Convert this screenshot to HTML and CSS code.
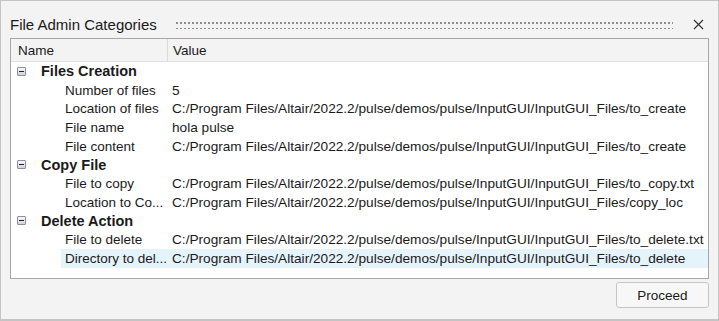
FILE: index.html
```html
<!DOCTYPE html>
<html lang="en">
<head>
  <meta charset="UTF-8">
  <title>File Admin Categories</title>
  <link rel="stylesheet" href="styles.css">
</head>
<body>
  <div class="window">
    <!-- Title bar -->
    <div class="titlebar">
      <span class="title">File Admin Categories</span>
      <span class="grip"></span>
      <span class="close">
        <svg width="11" height="11" viewBox="0 0 11 11"><path d="M1 1 L10 10 M10 1 L1 10" stroke="#333" stroke-width="1.2" fill="none"/></svg>
      </span>
    </div>

    <!-- Property grid -->
    <div class="grid">
      <div class="grid-head">
        <div class="col-name">Name</div>
        <div class="col-value">Value</div>
      </div>

      <div class="cat"><span class="toggle"></span>Files Creation</div>
      <div class="prop"><div class="col-name">Number of files</div><div class="col-value">5</div></div>
      <div class="prop"><div class="col-name">Location of files</div><div class="col-value">C:/Program Files/Altair/2022.2/pulse/demos/pulse/InputGUI/InputGUI_Files/to_create</div></div>
      <div class="prop"><div class="col-name">File name</div><div class="col-value">hola pulse</div></div>
      <div class="prop"><div class="col-name">File content</div><div class="col-value">C:/Program Files/Altair/2022.2/pulse/demos/pulse/InputGUI/InputGUI_Files/to_create</div></div>

      <div class="cat"><span class="toggle"></span>Copy File</div>
      <div class="prop"><div class="col-name">File to copy</div><div class="col-value">C:/Program Files/Altair/2022.2/pulse/demos/pulse/InputGUI/InputGUI_Files/to_copy.txt</div></div>
      <div class="prop"><div class="col-name">Location to Co...</div><div class="col-value">C:/Program Files/Altair/2022.2/pulse/demos/pulse/InputGUI/InputGUI_Files/copy_loc</div></div>

      <div class="cat"><span class="toggle"></span>Delete Action</div>
      <div class="prop"><div class="col-name">File to delete</div><div class="col-value">C:/Program Files/Altair/2022.2/pulse/demos/pulse/InputGUI/InputGUI_Files/to_delete.txt</div></div>
      <div class="prop selected"><div class="col-name">Directory to del...</div><div class="col-value">C:/Program Files/Altair/2022.2/pulse/demos/pulse/InputGUI/InputGUI_Files/to_delete</div></div>
    </div>

    <!-- Footer -->
    <div class="footer">
      <button class="btn">Proceed</button>
    </div>
  </div>
</body>
</html>
```

FILE: styles.css
```css
/* Global */
body {
  margin: 0;
  padding: 0;
  font-family: 'Liberation Sans', Arial, sans-serif;
  color: #1a1a1a;
}

/* Window */
.window {
  width: 719px;
  height: 321px;
  box-sizing: border-box;
  border: 1px solid #c4c4c4;
  border-bottom-width: 2px;
  background-color: #f3f3f3;
  display: flex;
  flex-direction: column;
}

/* Title bar */
.titlebar {
  height: 37px;
  display: flex;
  align-items: center;
  padding: 10px 14px 0 9px;
  box-sizing: border-box;
}

.title {
  font-size: 15px;
}

.grip {
  flex: 1;
  height: 8px;
  margin: 0 20px 0 18px;
  background-image: radial-gradient(circle, #8e8e8e 0.75px, transparent 1px);
  background-size: 4px 6px;
  background-position: 0 -1px;
}

.close {
  display: flex;
  width: 11px;
  height: 11px;
}

/* Property grid */
.grid {
  margin: 0 9px;
  height: 239px;
  border: 1px solid #a6a6a6;
  background-color: #fff;
  font-size: 13.5px;
  overflow: hidden;
}

.grid-head {
  display: flex;
  height: 22px;
  align-items: center;
  background-color: #f3f3f3;
  border-bottom: 1px solid #e2e2e2;
}

.grid-head .col-name {
  width: 149px;
  padding-left: 7px;
  height: 100%;
  display: flex;
  align-items: center;
  border-right: 1px solid #dadada;
}

.grid-head .col-value {
  padding-left: 5px;
}

.cat {
  height: 18.7px;
  display: flex;
  align-items: center;
  font-weight: bold;
  font-size: 14.5px;
  padding-left: 6px;
}

.toggle {
  width: 7px;
  height: 7px;
  border: 1px solid #8c8ea0;
  border-radius: 1px;
  background: linear-gradient(#f8f8fa, #cfd2da);
  margin-right: 15px;
  position: relative;
}

.toggle::after {
  content: "";
  position: absolute;
  left: 1px;
  top: 3px;
  width: 5px;
  height: 1px;
  background-color: #222;
}

.prop {
  height: 18.7px;
  display: flex;
  align-items: center;
  margin-left: 50px;
}

.prop .col-name {
  width: 107px;
  padding-left: 4px;
  white-space: nowrap;
}

.prop .col-value {
  white-space: nowrap;
  font-size: 13.65px;
}

.prop.selected {
  background-color: #e5f3fb;
}

/* Footer */
.footer {
  flex: 1;
  display: flex;
  justify-content: flex-end;
  align-items: flex-start;
  padding: 3px 9px 0 0;
}

.btn {
  width: 93px;
  height: 26px;
  padding: 0;
  font-family: 'Liberation Sans', Arial, sans-serif;
  font-size: 13.5px;
  color: #1a1a1a;
  background-color: #f7f7f7;
  border: 1px solid #c6c6c6;
  border-radius: 3px;
}
```
